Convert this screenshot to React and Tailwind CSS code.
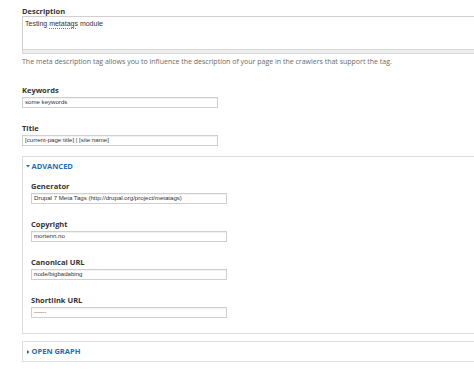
import React from "react";

const labelCls =
  "block h-[8px] leading-[8px] text-[7.5px] font-bold text-[#333] whitespace-nowrap [font-family:'Open_Sans',sans-serif]";
const inputCls =
  "mt-[3px] h-[11px] w-[196px] border border-[#cfcfcf] bg-white pl-[2px] flex items-center text-[6.1px] leading-none text-[#333] whitespace-nowrap overflow-hidden [font-family:'Liberation_Sans',Arial,sans-serif] shadow-[inset_0_1px_1px_rgba(0,0,0,0.06)]";

function Field({ label, value, className = "" }) {
  return (
    <div className={className}>
      <span className={labelCls}>{label}</span>
      <div className={inputCls}>{value}</div>
    </div>
  );
}

function Tri({ open }) {
  return (
    <svg width="4" height="4" viewBox="0 0 4 4" className="mr-[1.5px] shrink-0">
      {open ? (
        <polygon points="0,1 4,1 2,3.5" fill="#1a6fb8" />
      ) : (
        <polygon points="1,0 3.5,2 1,4" fill="#1a6fb8" />
      )}
    </svg>
  );
}

export default function App() {
  return (
    <div className="w-[474px] h-[374px] overflow-hidden bg-white pl-[22px] pt-[6.5px] [font-family:'Open_Sans',sans-serif]">
      <span className={labelCls}>Description</span>
      <div className="mt-[1.5px] w-[470px]">
        <div className="h-[33px] border border-[#cfcfcf] border-b-0 bg-white px-[2px] pt-[3px] text-[7px] leading-[8px] text-[#333] [font-family:'Liberation_Sans',Arial,sans-serif]">
          Testing{" "}
          <span className="underline decoration-dotted decoration-[#e05050] decoration-[1px] underline-offset-[1.5px]">
            metatags
          </span>{" "}
          module
        </div>
        <div className="h-[5px] border border-[#d8d8d8] bg-[#eeeeee]" />
      </div>
      <p className="mt-[3.5px] h-[8px] leading-[8px] text-[7px] text-[#6a6a6a] whitespace-nowrap">
        The meta description tag allows you to influence the description of your page in the crawlers that support the tag.
      </p>

      <Field className="mt-[20px]" label="Keywords" value="some keywords" />
      <Field className="mt-[16px]" label="Title" value="[current-page:title] | [site:name]" />

      <div className="mt-[10.5px] w-[470px] border border-[#dedede] pl-[8px] pt-[4.5px] pb-[15.5px]">
        <div className="-ml-[5px] flex h-[8px] items-center text-[7.5px] font-bold leading-[8px] text-[#1a6fb8]">
          <Tri open />
          ADVANCED
        </div>
        <Field className="mt-[12px]" label="Generator" value="Drupal 7 Meta Tags (http://drupal.org/project/metatags)" />
        <Field className="mt-[16px]" label="Copyright" value="mortenn.no" />
        <Field className="mt-[16px]" label="Canonical URL" value="node/bigbadabing" />
        <Field className="mt-[16px]" label="Shortlink URL" value="------" />
      </div>

      <div className="mt-[7px] flex h-[21px] w-[470px] items-center border border-[#dedede] pl-[3px] text-[7.5px] font-bold text-[#1a6fb8]">
        <Tri />
        OPEN GRAPH
      </div>
    </div>
  );
}
